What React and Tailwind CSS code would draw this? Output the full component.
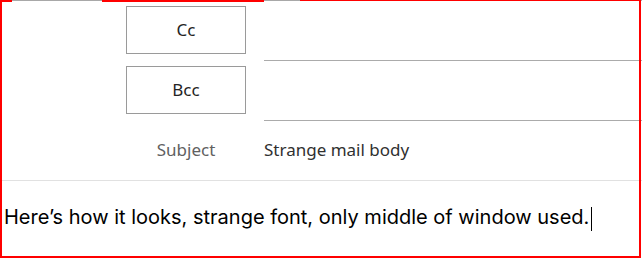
const headerFont = { fontFamily: '"Noto Sans", "Open Sans", sans-serif' };

const RecipientRow = ({ label }) => (
  <div className="flex h-[60px]">
    <div className="pl-[126px] pt-[5px]">
      <button className="flex h-[48px] w-[120px] items-center justify-center border border-[#9a9a9a] bg-white text-[17px] text-[#242424]">
        {label}
      </button>
    </div>
    <div className="ml-[18px] flex-1 border-b border-[#ababab]" />
  </div>
);

const App = () => {
  return (
    <div className="relative h-[259px] w-[642px] overflow-hidden bg-white" style={headerFont}>
      {/* bottom edge of the To field */}
      <div className="flex h-px">
        <div className="w-[12px]" />
        <div className="w-[90px] bg-[#a8a8a8]" />
        <div className="w-[162px]" />
        <div className="flex-1 bg-[#a8a8a8]" />
      </div>

      <RecipientRow label="Cc" />
      <RecipientRow label="Bcc" />

      {/* Subject */}
      <div className="flex h-[60px] items-center border-b border-[#e1e1e1] pb-[2px]">
        <div className="ml-[126px] w-[120px] text-center text-[17px] text-[#616161]">Subject</div>
        <div className="ml-[18px] text-[17px] text-[#303030]">Strange mail body</div>
      </div>

      {/* Body */}
      <div className="pl-[4px] pt-[23px]">
        <p
          className="whitespace-nowrap text-[20px] leading-[26px] text-black"
          style={{ fontFamily: 'Inter, "Noto Sans", sans-serif' }}
        >
          Here’s how it looks, strange font, only middle of window used.
          <span className="ml-[2px] inline-block h-[24px] w-px bg-black align-middle" />
        </p>
      </div>

      {/* red highlight rectangle */}
      <div className="pointer-events-none absolute inset-0 right-[1px] bottom-[1px] border-b-2 border-l-2 border-r-2 border-[#ff0000]" />
      <div className="pointer-events-none absolute left-0 top-0 h-[2px] w-[12px] bg-[#ff0000]" />
      <div className="pointer-events-none absolute left-[102px] top-0 h-[2px] w-[162px] bg-[#ff0000]" />
      <div className="pointer-events-none absolute left-[300px] right-[1px] top-0 h-px bg-[#ff0000]" />
    </div>
  );
};

export default App;
